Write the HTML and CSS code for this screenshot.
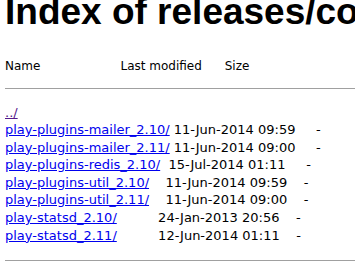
FILE: index.html
```
<!DOCTYPE html>
<html lang="en-US">
	<head>
		<meta charset="utf-8">
		<title>Index of releases/com/typesafe/play/plugins</title>
		<link rel="stylesheet" href="styles.css">
	</head>
	<body>
		<h1>Index of releases/com/typesafe/play/plugins</h1>
		<pre class="head">Name                     Last modified      Size</pre>
		<hr>
		<pre class="list"><a class="visited" href="../">../</a>
<a href="play-plugins-mailer_2.10/">play-plugins-mailer_2.10/</a> 11-Jun-2014 09:59     -
<a href="play-plugins-mailer_2.11/">play-plugins-mailer_2.11/</a> 11-Jun-2014 09:00     -
<a href="play-plugins-redis_2.10/">play-plugins-redis_2.10/</a>  15-Jul-2014 01:11     -
<a href="play-plugins-util_2.10/">play-plugins-util_2.10/</a>    11-Jun-2014 09:59    -
<a href="play-plugins-util_2.11/">play-plugins-util_2.11/</a>    11-Jun-2014 09:00    -
<a href="play-statsd_2.10/">play-statsd_2.10/</a>          24-Jan-2013 20:56    -
<a href="play-statsd_2.11/">play-statsd_2.11/</a>          12-Jun-2014 01:11    -</pre>
		<hr>
	</body>
</html>
```
FILE: styles.css
```
html,
body {
	background: #fff;
	overflow: hidden;
}
body {
	color: #000;
	margin: 0;
	padding: 0 0 0 5px;
}
h1 {
	font-family: "Liberation Sans", Arial, sans-serif;
	font-size: 37px;
	font-weight: bold;
	line-height: 40px;
	margin: -8px 0 26px;
	white-space: nowrap;
}
hr {
	border: 0;
	border-top: 1px solid #a0a0a0;
	height: 0;
	margin: 0;
}
pre {
	font-family: "DejaVu Sans", sans-serif;
	margin: 0;
}
pre.head {
	font-size: 12px;
	line-height: 17.5px;
	margin-bottom: 12px;
}
pre.list {
	font-size: 13px;
	line-height: 17.6px;
	margin: 15px 0 16px;
}
a {
	color: #0000ee;
}
a.visited {
	color: #551a8b;
}
```
